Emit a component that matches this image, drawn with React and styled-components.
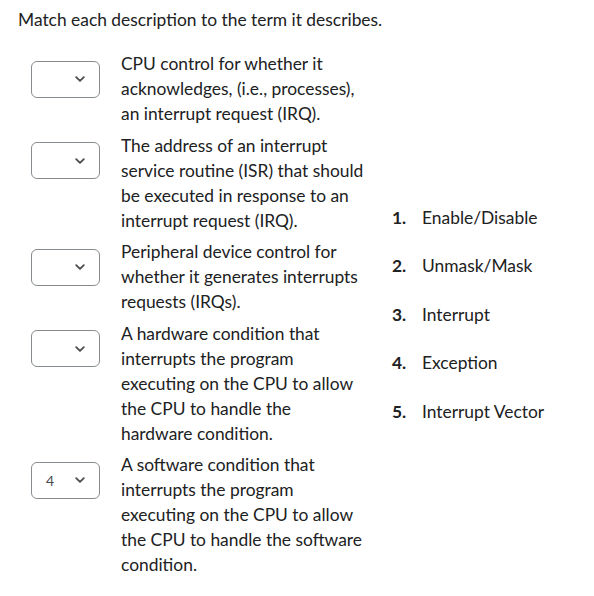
import React from "react";
import styled, { createGlobalStyle } from "styled-components";

const GlobalStyle = createGlobalStyle`
  body {
    margin: 0;
    background: #ffffff;
    font-family: Lato, "Open Sans", sans-serif;
    color: #202122;
  }
`;

const pairs = [
  { value: "", text: "CPU control for whether it acknowledges, (i.e., processes), an interrupt request (IRQ)." },
  { value: "", text: "The address of an interrupt service routine (ISR) that should be executed in response to an interrupt request (IRQ)." },
  { value: "", text: "Peripheral device control for whether it generates interrupts requests (IRQs)." },
  { value: "", text: "A hardware condition that interrupts the program executing on the CPU to allow the CPU to handle the hardware condition." },
  { value: "4", text: "A software condition that interrupts the program executing on the CPU to allow the CPU to handle the software condition." },
];

const terms = ["Enable/Disable", "Unmask/Mask", "Interrupt", "Exception", "Interrupt Vector"];

const Chevron = () => (
  <svg width="10" height="6" viewBox="0 0 10 6" fill="none">
    <path d="M1.2 1.2 L5 4.8 L8.8 1.2" stroke="#494c4e" strokeWidth="1.8" strokeLinecap="round" strokeLinejoin="round" />
  </svg>
);

export default function App() {
  return (
    <>
      <GlobalStyle />
      <Page>
        <Prompt>Match each description to the term it describes.</Prompt>
        <MatchArea>
          <Descriptions>
            {pairs.map((p, i) => (
              <Row key={i}>
                <SelectBox>
                  <SelectValue>{p.value}</SelectValue>
                  <Chevron />
                </SelectBox>
                <Description>{p.text}</Description>
              </Row>
            ))}
          </Descriptions>
          <TermList>
            {terms.map((t, i) => (
              <Term key={t}>
                <TermNum>{i + 1}.</TermNum>
                {t}
              </Term>
            ))}
          </TermList>
        </MatchArea>
      </Page>
    </>
  );
}

const Page = styled.div`
  padding: 7px 18px 0;
`;

const Prompt = styled.p`
  margin: 0;
  font-size: 17.4px;
  line-height: 25px;
`;

const MatchArea = styled.div`
  display: flex;
  align-items: center;
  margin-top: 19px;
  padding-left: 13px;
`;

const Descriptions = styled.div`
  display: flex;
  flex-direction: column;
  gap: 6.5px;
`;

const Row = styled.div`
  display: flex;
  align-items: flex-start;
  gap: 21px;
`;

const SelectBox = styled.div`
  box-sizing: border-box;
  width: 69px;
  height: 37px;
  margin-top: 9.5px;
  flex: none;
  display: flex;
  align-items: center;
  justify-content: space-between;
  padding: 0 14px 0 14px;
  border: 1px solid #868c8f;
  border-radius: 6px;
  background: #fff;
`;

const SelectValue = styled.span`
  font-size: 14px;
  color: #494c4e;
`;

const Description = styled.div`
  width: 243px;
  font-size: 17.4px;
  line-height: 25px;
`;

const TermList = styled.ol`
  list-style: none;
  margin: 0 0 0 28px;
  padding: 0;
  display: flex;
  flex-direction: column;
  gap: 23.5px;
`;

const Term = styled.li`
  display: flex;
  font-size: 17.4px;
  line-height: 25px;
`;

const TermNum = styled.span`
  width: 30px;
  font-weight: 700;
`;
